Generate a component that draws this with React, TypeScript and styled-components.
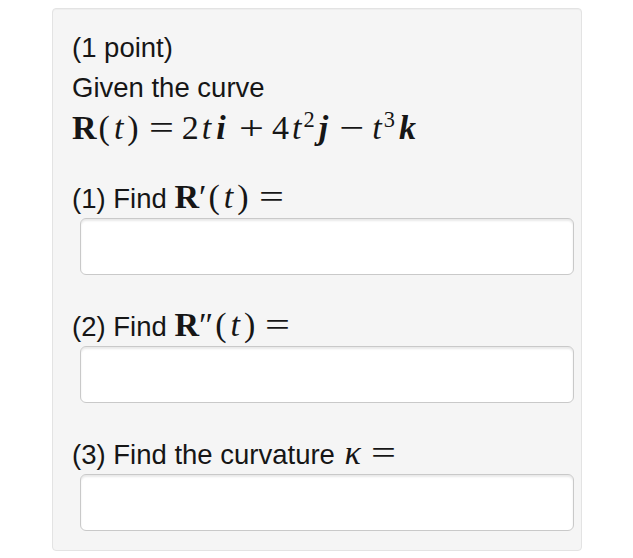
import * as React from 'react';
import styled, { createGlobalStyle } from 'styled-components';

const GlobalStyle = createGlobalStyle`
    html, body {
        margin: 0;
        padding: 0;
        background: #ffffff;
    }
    body {
        font-family: "Liberation Sans", Arial, sans-serif;
        color: #161616;
    }
`;

const Page = styled.div`
    padding: 8px 51px 0 52px;
`;

const Well = styled.div`
    box-sizing: border-box;
    width: 530px;
    height: 543px;
    background: #f5f5f5;
    border: 1px solid #e3e3e3;
    border-radius: 4px;
    box-shadow: inset 0 1px 1px rgba(0, 0, 0, 0.03);
    padding: 19px 8px 0 19px;
`;

const Line = styled.div`
    font-size: 27.5px;
    line-height: 40px;
    height: 40px;
    white-space: nowrap;
`;

const Question = styled.div`
    margin-top: ${p => p.$gap}px;
`;

const Answer = styled.input`
    box-sizing: border-box;
    display: block;
    width: 494px;
    height: 57px;
    margin: 1px 0 0 8px;
    background: #ffffff;
    border: 1px solid #c9c9c9;
    border-radius: 6px;
    box-shadow: inset 0 2px 2px rgba(0, 0, 0, 0.09);
    outline: none;
`;

const Math = styled.span`
    font-family: "Liberation Serif", "Times New Roman", serif;
    font-size: 34px;
`;

const Bold = styled.span`
    font-weight: bold;
`;

const Ital = styled.span`
    font-style: italic;
    margin: 0 2px;
`;

const BoldItal = styled.span`
    font-style: italic;
    font-weight: bold;
    margin: 0 5px 0 3px;
`;

const Paren = styled.span`
    margin: 0 2px;
`;

const Digit = styled.span`
    margin-right: 1px;
`;

const Op = styled.span`
    display: inline-block;
    margin: 0 ${p => p.$space ?? 11}px;
    transform: scaleX(1.3);
`;

const Sup = styled.sup`
    font-size: 0.66em;
    line-height: 0;
    vertical-align: 0.55em;
    margin: 0 1px 0 0;
`;

const R = () => <Bold>R</Bold>;
const T = () => <Ital>t</Ital>;
const Arg = () => (
    <>
        <Paren>(</Paren>
        <T />
        <Paren>)</Paren>
    </>
);

export default function App() {
    return (
        <Page>
            <GlobalStyle />
            <Well>
                <Line>(1 point)</Line>
                <Line>Given the curve</Line>
                <Line>
                    <Math>
                        <R /><Arg /><Op>=</Op><Digit>2</Digit><T /><BoldItal>i</BoldItal>
                        <Op>+</Op><Digit>4</Digit><T /><Sup>2</Sup><BoldItal>j</BoldItal>
                        <Op $space={9}>−</Op><T /><Sup>3</Sup><BoldItal>k</BoldItal>
                    </Math>
                </Line>

                <Question $gap={29}>
                    <Line>
                        (1) Find <Math><R />′<Arg /><Op>=</Op></Math>
                    </Line>
                    <Answer type="text" />
                </Question>

                <Question $gap={30}>
                    <Line>
                        (2) Find <Math><R />″<Arg /><Op>=</Op></Math>
                    </Line>
                    <Answer type="text" />
                </Question>

                <Question $gap={30}>
                    <Line>
                        (3) Find the curvature <Math><Ital>κ</Ital><Op>=</Op></Math>
                    </Line>
                    <Answer type="text" />
                </Question>
            </Well>
        </Page>
    );
}
